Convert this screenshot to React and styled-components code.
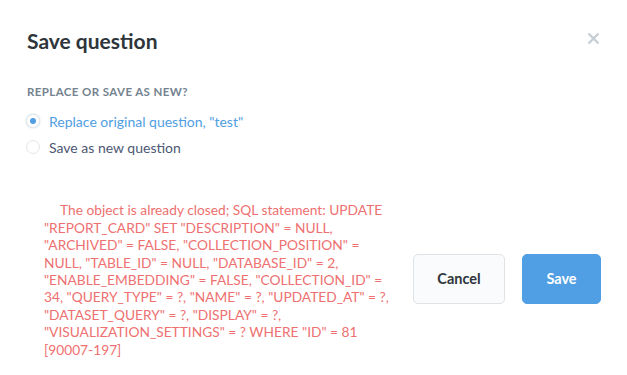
import React, { useState } from 'react';
import styled, { createGlobalStyle } from 'styled-components';

const GlobalStyle = createGlobalStyle`
  * { box-sizing: border-box; }
  body {
    margin: 0;
    background: #fff;
    font-family: Lato, "Noto Sans", sans-serif;
    color: #2e353b;
  }
`;

const Modal = styled.div`
  width: 627px;
  height: 375px;
  background: #fff;
  display: flex;
  flex-direction: column;
`;

const Header = styled.div`
  display: flex;
  align-items: center;
  justify-content: space-between;
  padding: 27px 26px 0 27px;
`;

const Title = styled.h2`
  margin: 0;
  font-size: 21px;
  line-height: 28px;
  font-weight: 700;
  color: #2e353b;
`;

const Close = styled.button`
  border: 0;
  background: none;
  padding: 0;
  width: 16px;
  height: 16px;
  display: flex;
  align-items: center;
  justify-content: center;
  cursor: pointer;
  color: #c7cfd4;
  margin-top: -6px;
`;

const Body = styled.div`
  padding: 0 27px;
`;

const SectionLabel = styled.h5`
  margin: 30px 0 9px;
  font-size: 11.5px;
  line-height: 14px;
  font-weight: 700;
  letter-spacing: 0.4px;
  text-transform: uppercase;
  color: #74838f;
`;

const Options = styled.ul`
  list-style: none;
  margin: 0;
  padding: 0;
`;

const Option = styled.li`
  display: flex;
  align-items: center;
  height: 26px;
  font-size: 14px;
  cursor: pointer;
  color: ${(p) => (p.$selected ? '#509ee3' : '#4c5773')};
`;

const Radio = styled.span`
  width: 14px;
  height: 14px;
  margin: 0 9px 0 -1px;
  border-radius: 50%;
  border: 1px solid #e4e7ea;
  background: #fff;
  display: flex;
  align-items: center;
  justify-content: center;
  box-shadow: ${(p) => (p.$selected ? '0 0 2px #c6d6e6' : 'none')};

  &::after {
    content: '';
    width: 6px;
    height: 6px;
    border-radius: 50%;
    background: ${(p) => (p.$selected ? '#509ee3' : 'transparent')};
  }
`;

const Footer = styled.div`
  margin-top: auto;
  display: flex;
  align-items: center;
  padding: 0 26px 17px 44px;
`;

const ErrorText = styled.p`
  margin: 0;
  width: 345px;
  font-size: 13.75px;
  line-height: 17.4px;
  color: #ee7070;
  text-indent: 16px;
`;

const Actions = styled.div`
  margin-left: auto;
  display: flex;
  gap: 17px;
  margin-bottom: 2px;
`;

const Button = styled.button`
  height: 50px;
  width: ${(p) => (p.$primary ? '79px' : '92px')};
  padding: 0;
  border-radius: 5px;
  font-family: inherit;
  font-size: 14.5px;
  font-weight: 700;
  cursor: pointer;
  border: 1px solid ${(p) => (p.$primary ? '#509ee3' : '#dfe3e6')};
  background: ${(p) => (p.$primary ? '#509ee3' : '#f9fbfc')};
  color: ${(p) => (p.$primary ? '#fff' : '#2e353b')};
`;

const options = [
  { id: 'overwrite', label: 'Replace original question, "test"' },
  { id: 'create', label: 'Save as new question' },
];

export default function App() {
  const [choice, setChoice] = useState('overwrite');

  return (
    <>
      <GlobalStyle />
      <Modal>
        <Header>
          <Title>Save question</Title>
          <Close aria-label="Close">
            <svg width="13" height="13" viewBox="0 0 13 13">
              <path d="M1.5 1.5 L11.5 11.5 M11.5 1.5 L1.5 11.5" stroke="currentColor" strokeWidth="2.4" />
            </svg>
          </Close>
        </Header>
        <Body>
          <SectionLabel>Replace or save as new?</SectionLabel>
          <Options>
            {options.map((o) => (
              <Option key={o.id} $selected={choice === o.id} onClick={() => setChoice(o.id)}>
                <Radio $selected={choice === o.id} />
                {o.label}
              </Option>
            ))}
          </Options>
        </Body>
        <Footer>
          <ErrorText>
            The object is already closed; SQL statement: UPDATE "REPORT_CARD" SET "DESCRIPTION" = NULL,
            "ARCHIVED" = FALSE, "COLLECTION_POSITION" = NULL, "TABLE_ID" = NULL, "DATABASE_ID" = 2,
            "ENABLE_EMBEDDING" = FALSE, "COLLECTION_ID" = 34, "QUERY_TYPE" = ?, "NAME" = ?, "UPDATED_AT" = ?,
            "DATASET_QUERY" = ?, "DISPLAY" = ?, "VISUALIZATION_SETTINGS" = ? WHERE "ID" = 81 [90007-197]
          </ErrorText>
          <Actions>
            <Button>Cancel</Button>
            <Button $primary>Save</Button>
          </Actions>
        </Footer>
      </Modal>
    </>
  );
}
